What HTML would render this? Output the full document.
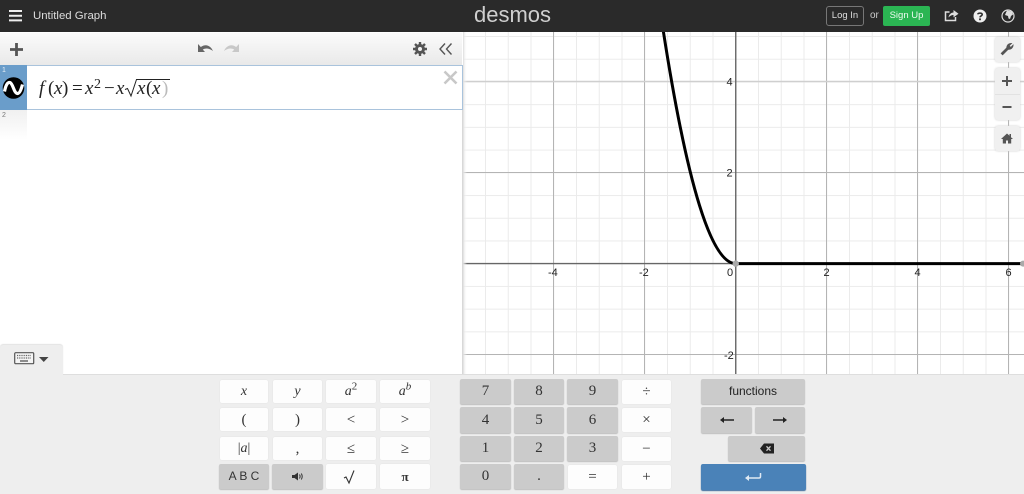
<!DOCTYPE html>
<html><head><meta charset="utf-8"><title>Untitled Graph</title>
<style>
html,body{margin:0;padding:0;width:1024px;height:494px;overflow:hidden;background:#fff;font-family:"Liberation Sans",sans-serif}
.a{position:absolute}
#top{left:0;top:0;width:1024px;height:32px;background:#2a2a2a;color:#e4e4e4}
#bar{left:0;top:33px;width:462px;height:32px;background:linear-gradient(#fbfbfb,#e9e9e9)}
#list{left:0;top:65px;width:463px;height:309px;background:#fff;border-right:1px solid #d8d8d8;box-sizing:border-box}
#kb{left:0;top:374px;width:1024px;height:120px;background:#eee;border-top:1px solid #dedede;box-sizing:border-box}
.k{position:absolute;box-sizing:border-box;background:#fdfdfd;border-radius:2px;box-shadow:0 0 1px #d8d8d8;text-align:center;font:italic 14px/24px "Liberation Serif",serif;color:#333}
.g{background:#cbcbcb;box-shadow:0 1px 1px #bdbdbd}
.n{font-style:normal;font-size:15px}
.m{position:absolute;font:italic 19px/20px "Liberation Serif",serif;color:#222;top:79px}
.r{font-style:normal}
sup{font-size:10px;line-height:0;font-style:italic}
.tool{position:absolute;left:995px;width:25px;background:#f0f0f0;border-radius:3px;box-shadow:0 0 2px #ccc}
</style></head><body>

<svg class="a" style="left:463px;top:32px" width="561" height="342" viewBox="463 32 561 342">
<defs>
<pattern id="mx" patternUnits="userSpaceOnUse" x="735.25" y="0" width="22.75" height="400"><rect x="0" width="1" height="400" fill="#ebebeb"/></pattern>
<pattern id="my" patternUnits="userSpaceOnUse" x="0" y="36" width="400" height="22.72"><rect y="0" width="400" height="1" fill="#ebebeb"/></pattern>
<linearGradient id="sh" x1="0" x2="1" y1="0" y2="0"><stop offset="0" stop-color="#ddd"/><stop offset="1" stop-color="#fff" stop-opacity="0"/></linearGradient>
</defs>
<rect x="463" y="32" width="561" height="342" fill="#fff"/>
<rect x="463" y="32" width="561" height="342" fill="url(#mx)"/>
<rect x="463" y="32" width="561" height="342" fill="url(#my)"/>
<g stroke="#b4b4b4" stroke-width="1">
<line x1="553.5" y1="32" x2="553.5" y2="374"/>
<line x1="644.5" y1="32" x2="644.5" y2="374"/>
<line x1="826.5" y1="32" x2="826.5" y2="374"/>
<line x1="917.5" y1="32" x2="917.5" y2="374"/>
<line x1="1008.5" y1="32" x2="1008.5" y2="374"/>
<line x1="463" y1="81.5" x2="1024" y2="81.5" stroke="#cfcfcf" stroke-width="1.4"/>
<line x1="463" y1="172.5" x2="1024" y2="172.5"/>
<line x1="463" y1="354.5" x2="1024" y2="354.5"/>
</g>
<line x1="735.75" y1="32" x2="735.75" y2="374" stroke="#666" stroke-width="1.4"/>
<line x1="463" y1="263.6" x2="1024" y2="263.6" stroke="#666" stroke-width="1.4"/>
<path d="M663.3 31 Q699.5 263.6 735.75 263.6 L1024 263.6" fill="none" stroke="#000" stroke-width="3"/>
<circle cx="735.75" cy="263.6" r="3.2" fill="#aaa"/>
<circle cx="1023" cy="263.6" r="3" fill="#aaa"/>
<rect x="463" y="32" width="4" height="342" fill="url(#sh)"/>
<g font-family="Liberation Sans, sans-serif" font-size="11" fill="#222">
<text x="548" y="276">-4</text><text x="639" y="276">-2</text><text x="727" y="276">0</text>
<text x="823.5" y="276">2</text><text x="914.5" y="276">4</text><text x="1005.5" y="276">6</text>
<text x="726.5" y="85.5">4</text><text x="726.5" y="176.5">2</text><text x="724" y="359">-2</text>
</g>
</svg>

<div id="top" class="a">
<svg class="a" style="left:9px;top:10px" width="13" height="12"><path d="M0 1h13M0 5.7h13M0 10.4h13" stroke="#eee" stroke-width="2"/></svg>
<div class="a" style="left:33px;top:8px;font-size:11.4px;line-height:16px;color:#ddd;white-space:nowrap">Untitled Graph</div>
<div class="a" style="left:474px;top:1px;font-size:22px;line-height:28px;color:#cfcfcf;white-space:nowrap">desmos</div>
<div class="a" style="left:826px;top:6px;width:38px;height:20px;box-sizing:border-box;border:1px solid #777;border-radius:3px;font-size:9.5px;line-height:18px;text-align:center;color:#ddd">Log In</div>
<div class="a" style="left:870px;top:9px;font-size:10px;line-height:14px;color:#ccc">or</div>
<div class="a" style="left:883px;top:6px;width:47px;height:20px;background:#2bb553;border-radius:2px;font-size:9.5px;line-height:20px;text-align:center;color:#eefbf0">Sign Up</div>
<svg class="a" style="left:944px;top:8px" width="15" height="15" viewBox="0 0 15 15"><path d="M11.5 9v3.5H1.5V4h4" fill="none" stroke="#ddd" stroke-width="1.5"/><path d="M4.5 9.5C5 6 7.5 4.500 9.500 4.500V2l5 3.700-5 3.700V7C7.500 7 6 7.800 4.500 9.500z" fill="#ddd"/></svg>
<svg class="a" style="left:973px;top:9px" width="14" height="14" viewBox="0 0 14 14"><circle cx="7" cy="7" r="6.5" fill="#eee"/><path d="M4.800 5.300C5 3.800 9.200 3.600 9.200 5.600 9.200 7 7 6.900 7 8.400" fill="none" stroke="#2a2a2a" stroke-width="1.6"/><rect x="6.100" y="9.400" width="1.800" height="1.800" fill="#2a2a2a"/></svg>
<svg class="a" style="left:1001px;top:9px" width="14" height="14" viewBox="0 0 14 14"><circle cx="7" cy="7" r="6" fill="none" stroke="#ddd" stroke-width="1.2"/><path d="M6 1.500l5 1 1 3-2 1.500-1 3-1.500-.5-.5-2.500-3-1 1-2.500z" fill="#ddd"/></svg>
</div>

<div id="bar" class="a">
<svg class="a" style="left:10px;top:10px" width="13" height="13"><path d="M6.500 0v13M0 6.500h13" stroke="#555" stroke-width="2.800"/></svg>
<svg class="a" style="left:197px;top:9px" width="17" height="12" viewBox="0 0 17 12"><path d="M1 2v8h7L5.800 7.600C8.500 5.800 12 6 16 9 14 4.500 9.500 1 3.800 5L1 2z" fill="#666"/></svg>
<svg class="a" style="left:223px;top:9px" width="17" height="12" viewBox="0 0 17 12"><path d="M16 2v8H9l2.200-2.400C8.500 5.800 5 6 1 9 3 4.500 7.500 1 13.200 5L16 2z" fill="#c8c8c8"/></svg>
<svg class="a" style="left:413px;top:9px" width="14" height="14" viewBox="0 0 14 14"><circle cx="7" cy="7" r="3.500" fill="none" stroke="#555" stroke-width="3"/><path d="M7 0v14M0 7h14M2 2l10 10M12 2L2 12" stroke="#555" stroke-width="2.400" stroke-dasharray="2.600 8.800 2.600 0"/></svg>
<svg class="a" style="left:439px;top:10px" width="14" height="12" viewBox="0 0 14 12"><path d="M6 .5L1 6l5 5.500M12.500 .5L7.500 6l5 5.500" fill="none" stroke="#555" stroke-width="1.400"/></svg>
</div>

<div id="list" class="a"></div>
<div class="a" style="left:0;top:65px;width:463px;height:45px;box-sizing:border-box;border:1px solid #a9c3dc;border-left:0;background:#fff"></div>
<div class="a" style="left:0;top:65px;width:27px;height:45px;background:#6a9dca"></div>
<div class="a" style="left:2px;top:66px;font-size:7px;line-height:9px;color:#e8f0f8">1</div>
<svg class="a" style="left:2px;top:76px" width="23" height="24" viewBox="0 0 23 24"><circle cx="11.500" cy="12" r="10.800" fill="#000"/><path d="M2.500 15.500C4 8 6 6 8 6.500 11 7.500 12 17.500 15.500 17.500 17.500 17.500 19 14 20.500 8.500" fill="none" stroke="#fff" stroke-width="3.200"/></svg>
<svg class="a" style="left:443px;top:70px" width="15" height="15"><path d="M1.500 1.500l12 12M13.500 1.500l-12 12" stroke="#c8c8c8" stroke-width="2.600"/></svg>
<div class="a" style="left:0;top:110px;width:27px;height:30px;background:linear-gradient(#f0f0f0,#fff)"></div>
<div class="a" style="left:2px;top:111px;font-size:7px;line-height:9px;color:#777">2</div>

<span class="m" style="left:39px">f</span><span class="m r" style="left:48px">(</span><span class="m" style="left:54px">x</span><span class="m r" style="left:62px">)</span>
<span class="m r" style="left:72px">=</span><span class="m" style="left:85px">x</span><span class="m r" style="left:94px;top:75px;font-size:14px">2</span>
<span class="m r" style="left:104px">−</span><span class="m" style="left:116px">x</span>
<svg class="a" style="left:124px;top:78px" width="48" height="20" viewBox="0 0 48 20"><path d="M1 11.500l2.500-1 3.500 7.500L12.500 1.500H46" fill="none" stroke="#222" stroke-width="1"/></svg>
<span class="m" style="left:137px">x</span><span class="m r" style="left:146px">(</span><span class="m" style="left:152px">x</span><span class="m r" style="left:162px;color:#bbb">)</span>

<div class="a" style="left:0;top:345px;width:63px;height:30px;background:#eee;border-radius:3px 3px 0 0;box-shadow:0 -1px 1px #e2e2e2;z-index:2">
<svg class="a" style="left:14px;top:7px" width="36" height="14" viewBox="0 0 36 14"><rect x=".7" y=".7" width="19" height="11" rx="1" fill="#f4f4f4" stroke="#555" stroke-width="1.200"/><path d="M3 3.500h14M3 6h14" stroke="#666" stroke-width="1.300" stroke-dasharray="1 .8"/><path d="M6 9h8" stroke="#555" stroke-width="1.300"/><path d="M25 5h9.500l-4.750 5z" fill="#444"/></svg>
</div>

<div id="kb" class="a"></div>
<div style="position:absolute;left:0;top:0;width:1024px;height:494px">
<div class="k" style="left:220px;top:380px;width:48px;height:23px">x</div>
<div class="k" style="left:273px;top:380px;width:49px;height:23px">y</div>
<div class="k" style="left:326px;top:380px;width:50px;height:23px">a<sup style="font-style:normal;font-size:11px">2</sup></div>
<div class="k" style="left:380px;top:380px;width:50px;height:23px">a<sup style="font-size:11px">b</sup></div>
<div class="k n" style="left:220px;top:408px;width:48px;height:23px">(</div>
<div class="k n" style="left:273px;top:408px;width:49px;height:23px">)</div>
<div class="k n" style="left:326px;top:408px;width:50px;height:23px">&lt;</div>
<div class="k n" style="left:380px;top:408px;width:50px;height:23px">&gt;</div>
<div class="k" style="left:220px;top:437px;width:48px;height:23px"><span style="font-style:normal">|</span>a<span style="font-style:normal">|</span></div>
<div class="k n" style="left:273px;top:437px;width:49px;height:23px">,</div>
<div class="k n" style="left:326px;top:437px;width:50px;height:23px">≤</div>
<div class="k n" style="left:380px;top:437px;width:50px;height:23px">≥</div>
<div class="k g" style="left:219px;top:464px;width:50px;height:25px;font:12px/25px 'Liberation Sans',sans-serif">A B C</div>
<div class="k g" style="left:272px;top:464px;width:51px;height:25px"><svg style="margin-top:8px" width="11" height="9" viewBox="0 0 11 9"><path d="M0 3h2.500L6 .5v8L2.500 6H0z" fill="#333"/><path d="M7.500 2.500q1.200 2 0 4M9.300 1.500q1.800 3 0 6" fill="none" stroke="#333"/></svg></div>
<div class="k" style="left:326px;top:464px;width:50px;height:25px"><svg style="margin-top:5px" width="16" height="16" viewBox="0 0 16 16"><path d="M1 9l2-1 3 6 5-12.500" fill="none" stroke="#333" stroke-width="1.100"/></svg></div>
<div class="k n" style="left:380px;top:464px;width:50px;height:25px;line-height:25px;font-size:13px;font-weight:bold">π</div>

<div class="k g n" style="left:460px;top:379px;width:51px;height:25px">7</div>
<div class="k g n" style="left:514px;top:379px;width:50px;height:25px">8</div>
<div class="k g n" style="left:567px;top:379px;width:51px;height:25px">9</div>
<div class="k n" style="left:622px;top:380px;width:49px;height:24px">÷</div>
<div class="k g n" style="left:460px;top:407px;width:51px;height:26px;line-height:26px">4</div>
<div class="k g n" style="left:514px;top:407px;width:50px;height:26px;line-height:26px">5</div>
<div class="k g n" style="left:567px;top:407px;width:51px;height:26px;line-height:26px">6</div>
<div class="k n" style="left:622px;top:408px;width:49px;height:24px">×</div>
<div class="k g n" style="left:460px;top:436px;width:51px;height:25px">1</div>
<div class="k g n" style="left:514px;top:436px;width:50px;height:25px">2</div>
<div class="k g n" style="left:567px;top:436px;width:51px;height:25px">3</div>
<div class="k n" style="left:622px;top:437px;width:49px;height:24px">−</div>
<div class="k g n" style="left:460px;top:464px;width:51px;height:25px">0</div>
<div class="k g n" style="left:514px;top:464px;width:50px;height:25px">.</div>
<div class="k n" style="left:568px;top:465px;width:49px;height:24px">=</div>
<div class="k n" style="left:622px;top:465px;width:49px;height:24px">+</div>

<div class="k g" style="left:701px;top:379px;width:104px;height:25px;font:12px/25px 'Liberation Sans',sans-serif;color:#222">functions</div>
<div class="k g" style="left:701px;top:407px;width:51px;height:26px"><svg style="margin-top:9px" width="14" height="8" viewBox="0 0 14 8"><path d="M2 4h12" stroke="#222" stroke-width="1.500"/><path d="M0 4l4-3v6z" fill="#222"/></svg></div>
<div class="k g" style="left:755px;top:407px;width:50px;height:26px"><svg style="margin-top:9px" width="14" height="8" viewBox="0 0 14 8"><path d="M0 4h12" stroke="#222" stroke-width="1.500"/><path d="M14 4l-4-3v6z" fill="#222"/></svg></div>
<div class="k g" style="left:728px;top:436px;width:77px;height:25px"><svg style="margin-top:7px" width="14" height="11" viewBox="0 0 14 11"><path d="M0 5.500L4 .5h10v10H4z" fill="#222"/><path d="M6.500 3.300l4 4.400M10.500 3.300l-4 4.400" stroke="#ccc" stroke-width="1.300"/></svg></div>
<div class="k" style="left:701px;top:464px;width:105px;height:26px;background:#4a82b8;box-shadow:0 1px 1px #3c6c9c"><svg style="margin-top:8px" width="17" height="11" viewBox="0 0 17 11"><path d="M15.500 1v3.500q0 1.500-1.500 1.500H2" fill="none" stroke="#dfe9f3" stroke-width="1.500"/><path d="M0 6l4-3v6z" fill="#dfe9f3"/></svg></div>
</div>

<div class="tool" style="top:37px;height:25px"><svg class="a" style="left:5px;top:5px" width="14" height="14" viewBox="0 0 13 13"><path d="M1.500 11.500L7 6" stroke="#555" stroke-width="2.600"/><path d="M6 6.500C5.500 3 7.500 .5 11.500 1L9 3.500l1 1L12.500 2C13 5.500 10 8 6.500 7z" fill="#555"/></svg></div>
<div class="tool" style="top:68px;height:52px"><svg class="a" style="left:6px;top:7px" width="12" height="38" viewBox="0 0 12 38"><path d="M6 1v10M1 6h10" stroke="#555" stroke-width="2"/><path d="M1.500 32h9" stroke="#555" stroke-width="2"/></svg><div class="a" style="left:0;top:26px;width:25px;height:1px;background:#e2e2e2"></div></div>
<div class="tool" style="top:126px;height:25px"><svg class="a" style="left:6px;top:7px" width="12" height="11" viewBox="0 0 12 11"><path d="M6 .5L0 6h1.800v4.500H5V7.500h2v3h3.200V6H12L10 4.200V1H8.500v1.800z" fill="#555"/></svg></div>
</body></html>
